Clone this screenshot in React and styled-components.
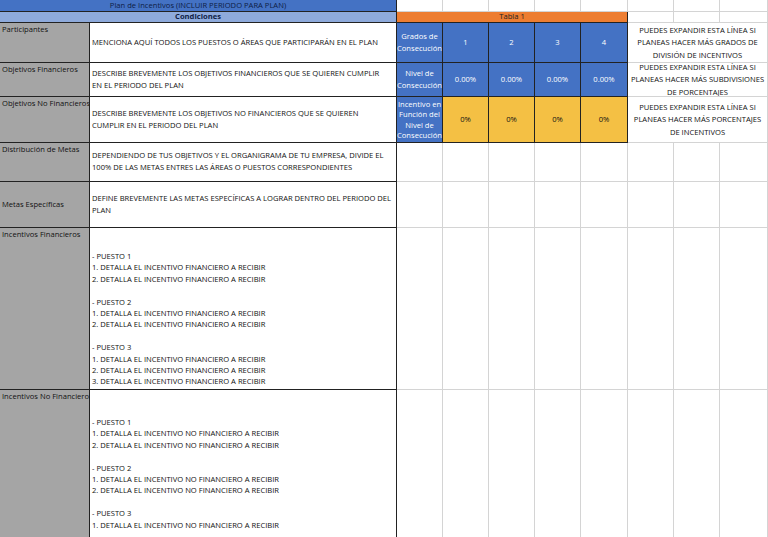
import React from 'react';
import styled, { createGlobalStyle } from 'styled-components';

const Global = createGlobalStyle`
  body { margin: 0; background: #fff; font-family: "Open Sans", "Liberation Sans", sans-serif; }
`;

const Sheet = styled.div`
  display: grid;
  grid-template-columns: 90px 307px 46px 46px 46px 46px 47px 46px 46px 48px;
  grid-template-rows: 12px 11px 40px 34px 46px 39px 46px 162px 170px;
  width: 768px;
  height: 537px;
  overflow: hidden;
  font-size: 7.6px;
  color: #111;
`;

const Cell = styled.div`
  grid-column: ${p => p.$col || 'auto'};
  background: ${p => p.$bg || '#fff'};
  color: ${p => p.$color || '#111'};
  border-right: 1px solid ${p => (p.$dark ? '#222' : '#d4d4d4')};
  border-bottom: 1px solid ${p => (p.$dark ? '#222' : '#d4d4d4')};
  display: flex;
  flex-direction: column;
  justify-content: ${p => p.$v || 'center'};
  align-items: ${p => (p.$center ? 'center' : 'flex-start')};
  text-align: ${p => (p.$center ? 'center' : 'left')};
  padding: ${p => p.$pad || '0 2px'};
  line-height: ${p => p.$lh || '1.55'};
  font-weight: ${p => (p.$bold ? 700 : 400)};
  overflow: hidden;
`;

const Label = styled(Cell).attrs(p => ({ $dark: true, $bg: '#a5a5a5', $v: p.$v || 'flex-start' }))`
  white-space: nowrap;
  padding-top: 1px;
`;
const Text = styled(Cell).attrs({ $dark: true })``;
const Blue = styled(Cell).attrs({ $dark: true, $bg: '#4472c4', $color: '#fff', $center: true })``;
const Yellow = styled(Cell).attrs({ $dark: true, $bg: '#f4c044', $center: true })``;
const Note = styled(Cell).attrs({ $center: true, $col: 'span 3' })`
  font-size: 7.6px;
  line-height: 1.6;
`;

const Empty = ({ n }) => Array.from({ length: n }, (_, i) => <Cell key={i} />);

const Lines = ({ items }) => items.map((l, i) => <div key={i}>{l || '\u00a0'}</div>);

export default function App() {
  const levels = ['1', '2', '3', '4'];
  return (
    <>
      <Global />
      <Sheet>
        <Cell $col="span 2" $bg="#4472c4" $color="#0e1d45" $center $dark>Plan de Incentivos (INCLUIR PERIODO PARA PLAN)</Cell>
        <Empty n={8} />

        <Cell $col="span 2" $bg="#8eaadb" $color="#0e1d45" $center $bold $dark>Condiciones</Cell>
        <Cell $col="span 5" $bg="#ed7d31" $color="#222" $center $dark>Tabla 1</Cell>
        <Empty n={3} />

        <Label>Participantes</Label>
        <Text>MENCIONA AQUÍ TODOS LOS PUESTOS O ÁREAS QUE PARTICIPARÁN EN EL PLAN</Text>
        <Blue $lh="1.5">Grados de<br />Consecución</Blue>
        {levels.map(l => <Blue key={l}>{l}</Blue>)}
        <Note>PUEDES EXPANDIR ESTA LÍNEA SI<br />PLANEAS HACER MÁS GRADOS DE<br />DIVISIÓN DE INCENTIVOS</Note>

        <Label>Objetivos Financieros</Label>
        <Text>DESCRIBE BREVEMENTE LOS OBJETIVOS FINANCIEROS QUE SE QUIEREN CUMPLIR<br />EN EL PERIODO DEL PLAN</Text>
        <Blue $lh="1.5">Nivel de<br />Consecución</Blue>
        {levels.map(l => <Blue key={l}>0.00%</Blue>)}
        <Note>PUEDES EXPANDIR ESTA LÍNEA SI<br />PLANEAS HACER MÁS SUBDIVISIONES<br />DE PORCENTAJES</Note>

        <Label>Objetivos No Financieros</Label>
        <Text>DESCRIBE BREVEMENTE LOS OBJETIVOS NO FINANCIEROS QUE SE QUIEREN<br />CUMPLIR EN EL PERIODO DEL PLAN</Text>
        <Blue $lh="1.35">Incentivo en<br />Función del<br />Nivel de<br />Consecución</Blue>
        {levels.map(l => <Yellow key={l}>0%</Yellow>)}
        <Note>PUEDES EXPANDIR ESTA LÍNEA SI<br />PLANEAS HACER MÁS PORCENTAJES<br />DE INCENTIVOS</Note>

        <Label>Distribución de Metas</Label>
        <Text>DEPENDIENDO DE TUS OBJETIVOS Y EL ORGANIGRAMA DE TU EMPRESA, DIVIDE EL<br />100% DE LAS METAS ENTRES LAS ÁREAS O PUESTOS CORRESPONDIENTES</Text>
        <Empty n={8} />

        <Label $v="center">Metas Específicas</Label>
        <Text>DEFINE BREVEMENTE LAS METAS ESPECÍFICAS A LOGRAR DENTRO DEL PERIODO DEL<br />PLAN</Text>
        <Empty n={8} />

        <Label>Incentivos Financieros</Label>
        <Text $v="flex-start" $pad="23px 2px 0" $lh="1.5">
          <Lines items={[
            '- PUESTO 1', '1. DETALLA EL INCENTIVO FINANCIERO A RECIBIR', '2. DETALLA EL INCENTIVO FINANCIERO A RECIBIR', '',
            '- PUESTO 2', '1. DETALLA EL INCENTIVO FINANCIERO A RECIBIR', '2. DETALLA EL INCENTIVO FINANCIERO A RECIBIR', '',
            '- PUESTO 3', '1. DETALLA EL INCENTIVO FINANCIERO A RECIBIR', '2. DETALLA EL INCENTIVO FINANCIERO A RECIBIR', '3. DETALLA EL INCENTIVO FINANCIERO A RECIBIR',
          ]} />
        </Text>
        <Empty n={8} />

        <Label>Incentivos No Financieros</Label>
        <Text $v="flex-start" $pad="27px 2px 0" $lh="1.5">
          <Lines items={[
            '- PUESTO 1', '1. DETALLA EL INCENTIVO NO FINANCIERO A RECIBIR', '2. DETALLA EL INCENTIVO NO FINANCIERO A RECIBIR', '',
            '- PUESTO 2', '1. DETALLA EL INCENTIVO NO FINANCIERO A RECIBIR', '2. DETALLA EL INCENTIVO NO FINANCIERO A RECIBIR', '',
            '- PUESTO 3', '1. DETALLA EL INCENTIVO NO FINANCIERO A RECIBIR',
          ]} />
        </Text>
        <Empty n={8} />
      </Sheet>
    </>
  );
}
